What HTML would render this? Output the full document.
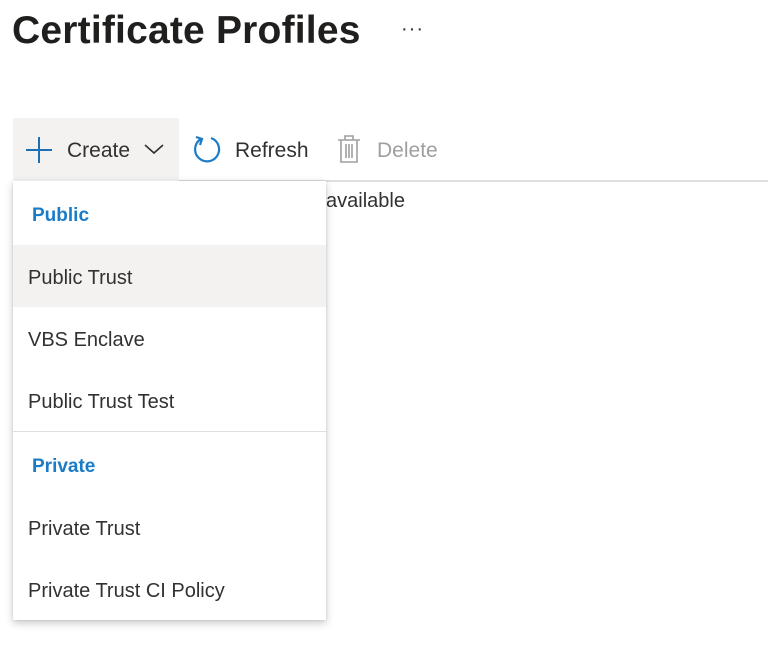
<!DOCTYPE html>
<html><head><style>
body{margin:0;width:768px;height:649px;background:#fff;font-family:"Liberation Sans",sans-serif;color:#323130;position:relative;overflow:hidden}
.a{position:absolute}
h1{position:absolute;left:12px;top:9px;margin:0;font-size:39px;font-weight:bold;color:#201f1e;letter-spacing:0.2px}
.tb{font-size:21px;color:#323130}
.menu{left:13px;top:181px;width:313px;height:439px;background:#fff;box-shadow:0 3px 8px rgba(0,0,0,.22),0 0 2px rgba(0,0,0,.12)}
.it{position:absolute;left:0;width:313px;height:62px;line-height:66px;font-size:20px;padding-left:15px;box-sizing:border-box}
.hd{color:#1a7cc7;font-weight:bold;padding-left:19px;font-size:19px}
</style></head><body>
<h1>Certificate Profiles</h1>
<div class="a" style="left:401px;top:18px;font-size:20px;letter-spacing:1px">···</div>
<div class="a" style="left:13px;top:118px;width:166px;height:62px;background:#f3f2f1"></div>
<div class="a" style="left:179px;top:180px;width:589px;height:2px;background:#e1dfdd"></div>
<svg class="a" style="left:25px;top:136px" width="28" height="28"><path d="M14 1V27M1 14H27" stroke="#1a6fb5" stroke-width="2"/></svg>
<div class="a tb" style="left:67px;top:139px">Create</div>
<svg class="a" style="left:143px;top:142px" width="22" height="14"><path d="M2 3L11 11L20 3" stroke="#323130" stroke-width="1.6" fill="none"/></svg>
<svg class="a" style="left:191px;top:134px" width="32" height="32"><path d="M10 5A12 12 0 1 0 20 4" stroke="#1a7cc7" stroke-width="2.2" fill="none"/><path d="M5 3L11 5L9 11" stroke="#1a7cc7" stroke-width="2.2" fill="none"/></svg>
<div class="a tb" style="left:235px;top:139px">Refresh</div>
<svg class="a" style="left:336px;top:134px" width="26" height="30"><path d="M2 6H24M9 6V2H17V6M5 6V28H21V6M10 10V24M13 10V24M16 10V24" stroke="#a19f9d" stroke-width="1.6" fill="none"/></svg>
<div class="a tb" style="left:377px;top:139px;color:#a19f9d">Delete</div>
<div class="a" style="left:326px;top:190px;font-size:20px">available</div>
<div class="a menu">
<div class="it hd" style="top:2px">Public</div>
<div class="it" style="top:64px;background:#f3f2f1">Public Trust</div>
<div class="it" style="top:126px">VBS Enclave</div>
<div class="it" style="top:188px">Public Trust Test</div>
<div class="a" style="left:0;top:250px;width:313px;height:1px;background:#e1dfdd"></div>
<div class="it hd" style="top:253px">Private</div>
<div class="it" style="top:315px">Private Trust</div>
<div class="it" style="top:377px">Private Trust CI Policy</div>
</div>
</body></html>
